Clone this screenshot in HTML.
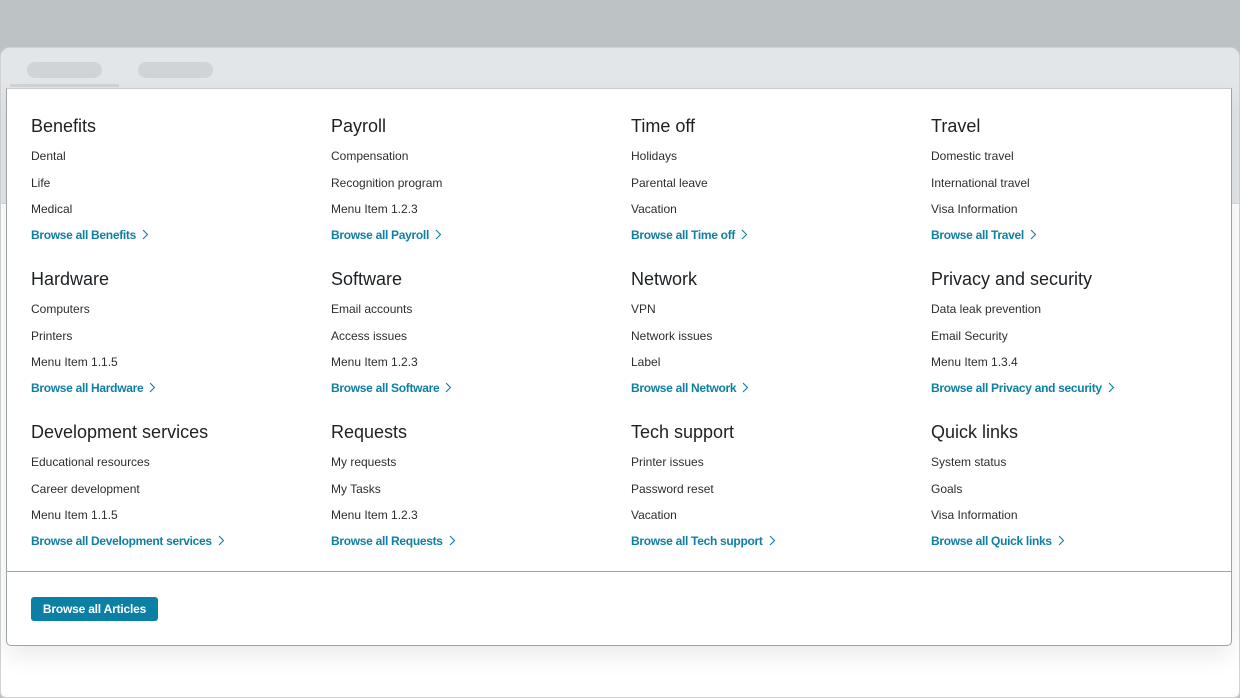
<!DOCTYPE html>
<html><head><style>
*{margin:0;padding:0;box-sizing:border-box}
body{width:1240px;height:698px;background:#bdc3c5;position:relative;overflow:hidden;font-family:"Liberation Sans",sans-serif}
.win{position:absolute;left:0;top:47px;width:1240px;height:651px;background:#fff;border:1px solid #cfd3d5;border-radius:10px 10px 6px 6px;overflow:hidden}
.hdr{position:absolute;left:0;top:0;width:100%;height:156px;background:#e3e6e8;border-bottom:1px solid #d6d9db}
.pill{position:absolute;top:14px;height:16px;width:75px;background:#d0d4d7;border-radius:8px}
.ul{position:absolute;left:9px;top:36px;width:109px;height:3px;background:#d0d4d7}
.panel{position:absolute;left:6px;top:88px;width:1226px;height:558px;background:#fff;border:1px solid #9ea3a6;border-top:1px solid #c9cdd0;border-radius:0 0 5px 5px;box-shadow:0 10px 24px rgba(0,0,0,.08)}
.sec{position:absolute;width:290px}
.sec h3{font-weight:normal;font-size:18px;color:#1d2124;position:absolute;top:-9px;left:0;white-space:nowrap}
.sec .i{position:absolute;left:0;font-size:12px;color:#2a2e31;white-space:nowrap}
.sec a{position:absolute;left:0;font-size:12px;color:#0f7fa3;font-weight:bold;white-space:nowrap;text-decoration:none;letter-spacing:-0.3px}
.sec a svg{margin-left:6px;vertical-align:-1px}
.div{position:absolute;left:0;top:482px;width:100%;height:1px;background:#9ea3a6}
.btn{position:absolute;left:24px;top:508px;width:127px;height:24px;background:#0b7fa4;border-radius:3px;color:#fff;font-size:12px;font-weight:bold;text-align:center;line-height:24px;letter-spacing:-0.2px}
</style></head><body>
<div class="win">
<div class="hdr"><div class="pill" style="left:26px"></div><div class="pill" style="left:137px"></div><div class="ul"></div></div>
</div>
<div class="panel">
<div id="c"></div>
<div class="div"></div>
<div class="btn">Browse all Articles</div>
</div>
<script>
var d=[["Benefits",["Dental","Life","Medical"]],["Payroll",["Compensation","Recognition program","Menu Item 1.2.3"]],["Time off",["Holidays","Parental leave","Vacation"]],["Travel",["Domestic travel","International travel","Visa Information"]],
["Hardware",["Computers","Printers","Menu Item 1.1.5"]],["Software",["Email accounts","Access issues","Menu Item 1.2.3"]],["Network",["VPN","Network issues","Label"]],["Privacy and security",["Data leak prevention","Email Security","Menu Item 1.3.4"]],
["Development services",["Educational resources","Career development","Menu Item 1.1.5"]],["Requests",["My requests","My Tasks","Menu Item 1.2.3"]],["Tech support",["Printer issues","Password reset","Vacation"]],["Quick links",["System status","Goals","Visa Information"]]];
var h="";d.forEach(function(s,k){var x=24+(k%4)*300,y=36+Math.floor(k/4)*153;
h+='<div class="sec" style="left:'+x+'px;top:'+y+'px"><h3>'+s[0]+'</h3>';
s[1].forEach(function(t,j){h+='<div class="i" style="top:'+(24+j*26.5)+'px">'+t+'</div>'});
h+='<a style="top:103px">Browse all '+s[0]+'<svg width="7" height="11" viewBox="0 0 7 11"><path d="M1 1l4.5 4.5L1 10" fill="none" stroke="#0f7fa3" stroke-width="1.1"/></svg></a></div>'});
document.getElementById("c").innerHTML=h;
</script>
</body></html>
